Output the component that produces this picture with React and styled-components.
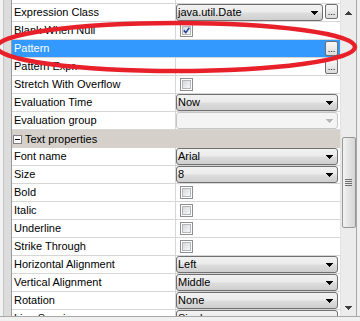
import React from "react";
import styled, { createGlobalStyle } from "styled-components";

const GlobalStyle = createGlobalStyle`
  html, body {
    margin: 0;
    padding: 0;
    background: #f0f0f0;
  }
  body {
    font-family: "Liberation Sans", Arial, sans-serif;
    font-size: 11px;
    color: #000;
  }
`;

const Window = styled.div`
  position: relative;
  width: 360px;
  height: 321px;
  overflow: hidden;
  display: flex;
  flex-direction: column;
  background: #f0f0f0;
`;

const Main = styled.div`
  display: flex;
  height: 316px;
`;

const LeftStrip = styled.div`
  width: 12px;
  flex: none;
  display: flex;
  padding-left: 3px;
  box-sizing: border-box;
  background: #f2f2f2;
`;

const Splitter = styled.div`
  flex: 1;
  background: #dcdcdc;
  border-left: 1px solid #c4c4c4;
  border-right: 1px solid #9a9a9a;
`;

const Sheet = styled.div`
  width: 328px;
  flex: none;
  display: flex;
  flex-direction: column;
  background: #fff;
  overflow: hidden;
`;

const Row = styled.div`
  flex: none;
  display: grid;
  grid-template-columns: 164px 164px;
  height: ${(p) => p.$height || 18}px;
  box-sizing: border-box;
  border-bottom: 1px solid #d6d6d6;
  background: ${(p) => (p.$selected ? "#3399ff" : "#fff")};
  color: ${(p) => (p.$selected ? "#fff" : "#000")};
`;

const NameCell = styled.div`
  padding-left: 2px;
  line-height: 17px;
  white-space: nowrap;
  overflow: hidden;
  border-right: 1px solid ${(p) => (p.$selected ? "#3399ff" : "#d6d6d6")};
`;

const ValueCell = styled.div`
  display: flex;
  align-items: ${(p) => (p.$top ? "flex-start" : "center")};
  gap: 2px;
  padding-right: 2px;
  min-width: 0;
  overflow: hidden;
`;

const SectionRow = styled.div`
  flex: none;
  height: 18px;
  box-sizing: border-box;
  display: flex;
  align-items: center;
  gap: 3px;
  padding-left: 1px;
  background: #d5d1ca;
`;

const MinusBox = styled.span`
  width: 9px;
  height: 9px;
  box-sizing: border-box;
  border: 1px solid #808080;
  background: #fff;
  display: flex;
  align-items: center;
  justify-content: center;

  &::after {
    content: "";
    width: 5px;
    height: 1px;
    background: #000;
  }
`;

const SectionLabel = styled.span`
  line-height: 17px;
`;

const Combo = styled.div`
  flex: 1;
  height: 17px;
  box-sizing: border-box;
  display: flex;
  align-items: center;
  justify-content: space-between;
  padding: 0 4px 0 1px;
  border: 1px solid ${(p) => (p.$disabled ? "#c6c6c6" : "#707070")};
  border-radius: 3px;
  background: ${(p) =>
    p.$disabled
      ? "#f4f4f4"
      : "linear-gradient(#f2f2f2 0%, #ebebeb 48%, #dddddd 52%, #cfcfcf 100%)"};
  color: #000;
`;

const ComboText = styled.span`
  white-space: nowrap;
  line-height: 15px;
`;

const MoreButton = styled.div`
  width: 13px;
  height: 15px;
  flex: none;
  margin-left: auto;
  box-sizing: border-box;
  border: 1px solid #707070;
  border-radius: 2px;
  background: linear-gradient(#f8f8f8, #dcdcdc);
  display: flex;
  align-items: flex-end;
  justify-content: center;
  padding-bottom: 2px;
  font-family: "DejaVu Sans", sans-serif;
  font-size: 8px;
  line-height: 6px;
  color: #000;
`;

const CheckBox = styled.div`
  width: 13px;
  height: 13px;
  margin-left: 4px;
  box-sizing: border-box;
  border: 1px solid #8e8f8f;
  background: #fff;
  padding: 1px;
  display: flex;
`;

const CheckInner = styled.div`
  flex: 1;
  box-sizing: border-box;
  border: 1px solid #b4b6ba;
  background: linear-gradient(135deg, #d6d8dc, #f8f8f8);
  display: flex;
  align-items: center;
  justify-content: center;
`;

const Scrollbar = styled.div`
  width: 17px;
  flex: none;
  box-sizing: border-box;
  display: flex;
  flex-direction: column;
  padding-top: 4px;
  background: #ececec;
  border-left: 1px solid #e2e2e2;
  border-right: 1px solid #a6a6a6;
`;

const ArrowButton = styled.div`
  height: 17px;
  flex: none;
  display: flex;
  align-items: center;
  justify-content: center;
`;

const Track = styled.div`
  flex: 1;
  display: flex;
  flex-direction: column;
  align-items: center;
`;

const Thumb = styled.div`
  width: 14px;
  height: 91px;
  box-sizing: border-box;
  border: 1px solid #979797;
  border-radius: 2px;
  background: linear-gradient(90deg, #f3f3f3, #e3e3e3 50%, #d6d6d6);
  display: flex;
  align-items: center;
  justify-content: center;
`;

const RightEdge = styled.div`
  flex: 1;
  background: #f0f0f0;
`;

const BottomBar = styled.div`
  flex: 1;
  border-top: 1px solid #a8a8a8;
  background: #f0f0f0;
`;

const Overlay = styled.svg`
  position: absolute;
  left: 0;
  top: 0;
  pointer-events: none;
`;

const DropArrow = ({ color = "#000" }) => (
  <svg width="7" height="4" viewBox="0 0 7 4" shapeRendering="crispEdges">
    <path d="M0 0h7v1h-1v1h-1v1h-1v1h-1v-1h-1v-1h-1v-1h-1z" fill={color} />
  </svg>
);

const UpArrow = () => (
  <svg width="7" height="4" viewBox="0 0 7 4" shapeRendering="crispEdges">
    <path d="M0 4h7v-1h-1v-1h-1v-1h-1v-1h-1v1h-1v1h-1v1h-1z" fill="#404040" />
  </svg>
);

const Grip = () => (
  <svg width="7" height="8" viewBox="0 0 7 8" shapeRendering="crispEdges">
    {[0, 2, 4, 6].map((y) => (
      <rect key={y} x="0" y={y} width="7" height="1" fill="#6f6f6f" />
    ))}
  </svg>
);

const Tick = () => (
  <svg width="7" height="7" viewBox="0 0 7 7">
    <path d="M0.8 3.4 L2.8 5.6 L6.3 0.8" fill="none" stroke="#21409a" strokeWidth="1.6" />
  </svg>
);

const rows = [
  { name: "Expression Class", type: "comboMore", value: "java.util.Date" },
  { name: "Blank When Null", type: "check", checked: true },
  { name: "Pattern", type: "more", selected: true },
  { name: "Pattern Expr.", type: "more" },
  { name: "Stretch With Overflow", type: "check" },
  { name: "Evaluation Time", type: "combo", value: "Now" },
  { name: "Evaluation group", type: "combo", value: "", disabled: true },
  { section: "Text properties" },
  { name: "Font name", type: "combo", value: "Arial" },
  { name: "Size", type: "combo", value: "8" },
  { name: "Bold", type: "check" },
  { name: "Italic", type: "check" },
  { name: "Underline", type: "check" },
  { name: "Strike Through", type: "check" },
  { name: "Horizontal Alignment", type: "combo", value: "Left" },
  { name: "Vertical Alignment", type: "combo", value: "Middle" },
  { name: "Rotation", type: "combo", value: "None" },
  { name: "Line Spacing", type: "combo", value: "Single" },
];

const Value = ({ row }) => {
  if (row.type === "check") {
    return (
      <CheckBox>
        <CheckInner>{row.checked && <Tick />}</CheckInner>
      </CheckBox>
    );
  }
  if (row.type === "more") return <MoreButton>...</MoreButton>;
  const combo = (
    <Combo $disabled={row.disabled}>
      <ComboText>{row.value}</ComboText>
      <DropArrow color={row.disabled ? "#b8b8b8" : "#000"} />
    </Combo>
  );
  if (row.type === "comboMore") {
    return (
      <>
        {combo}
        <MoreButton>...</MoreButton>
      </>
    );
  }
  return combo;
};

const PropertySheet = () => (
  <Sheet>
    <Row $height={4}>
      <NameCell />
      <ValueCell />
    </Row>
    {rows.map((row) =>
      row.section ? (
        <SectionRow key={row.section}>
          <MinusBox />
          <SectionLabel>{row.section}</SectionLabel>
        </SectionRow>
      ) : (
        <Row key={row.name} $selected={row.selected}>
          <NameCell $selected={row.selected}>{row.name}</NameCell>
          <ValueCell $top={row.type === "combo" || row.type === "comboMore"}>
            <Value row={row} />
          </ValueCell>
        </Row>
      )
    )}
  </Sheet>
);

const App = () => (
  <>
    <GlobalStyle />
    <Window>
      <Main>
        <LeftStrip>
          <Splitter />
        </LeftStrip>
        <PropertySheet />
        <Scrollbar>
          <ArrowButton>
            <UpArrow />
          </ArrowButton>
          <Track>
            <Thumb style={{ marginTop: 116 }}>
              <Grip />
            </Thumb>
          </Track>
          <ArrowButton>
            <DropArrow color="#404040" />
          </ArrowButton>
        </Scrollbar>
        <RightEdge />
      </Main>
      <BottomBar />
      <Overlay width="360" height="321" viewBox="0 0 360 321">
        <ellipse
          cx="176"
          cy="47"
          rx="179"
          ry="24"
          fill="none"
          stroke="#e8202a"
          strokeWidth="4.5"
        />
      </Overlay>
    </Window>
  </>
);

export default App;
